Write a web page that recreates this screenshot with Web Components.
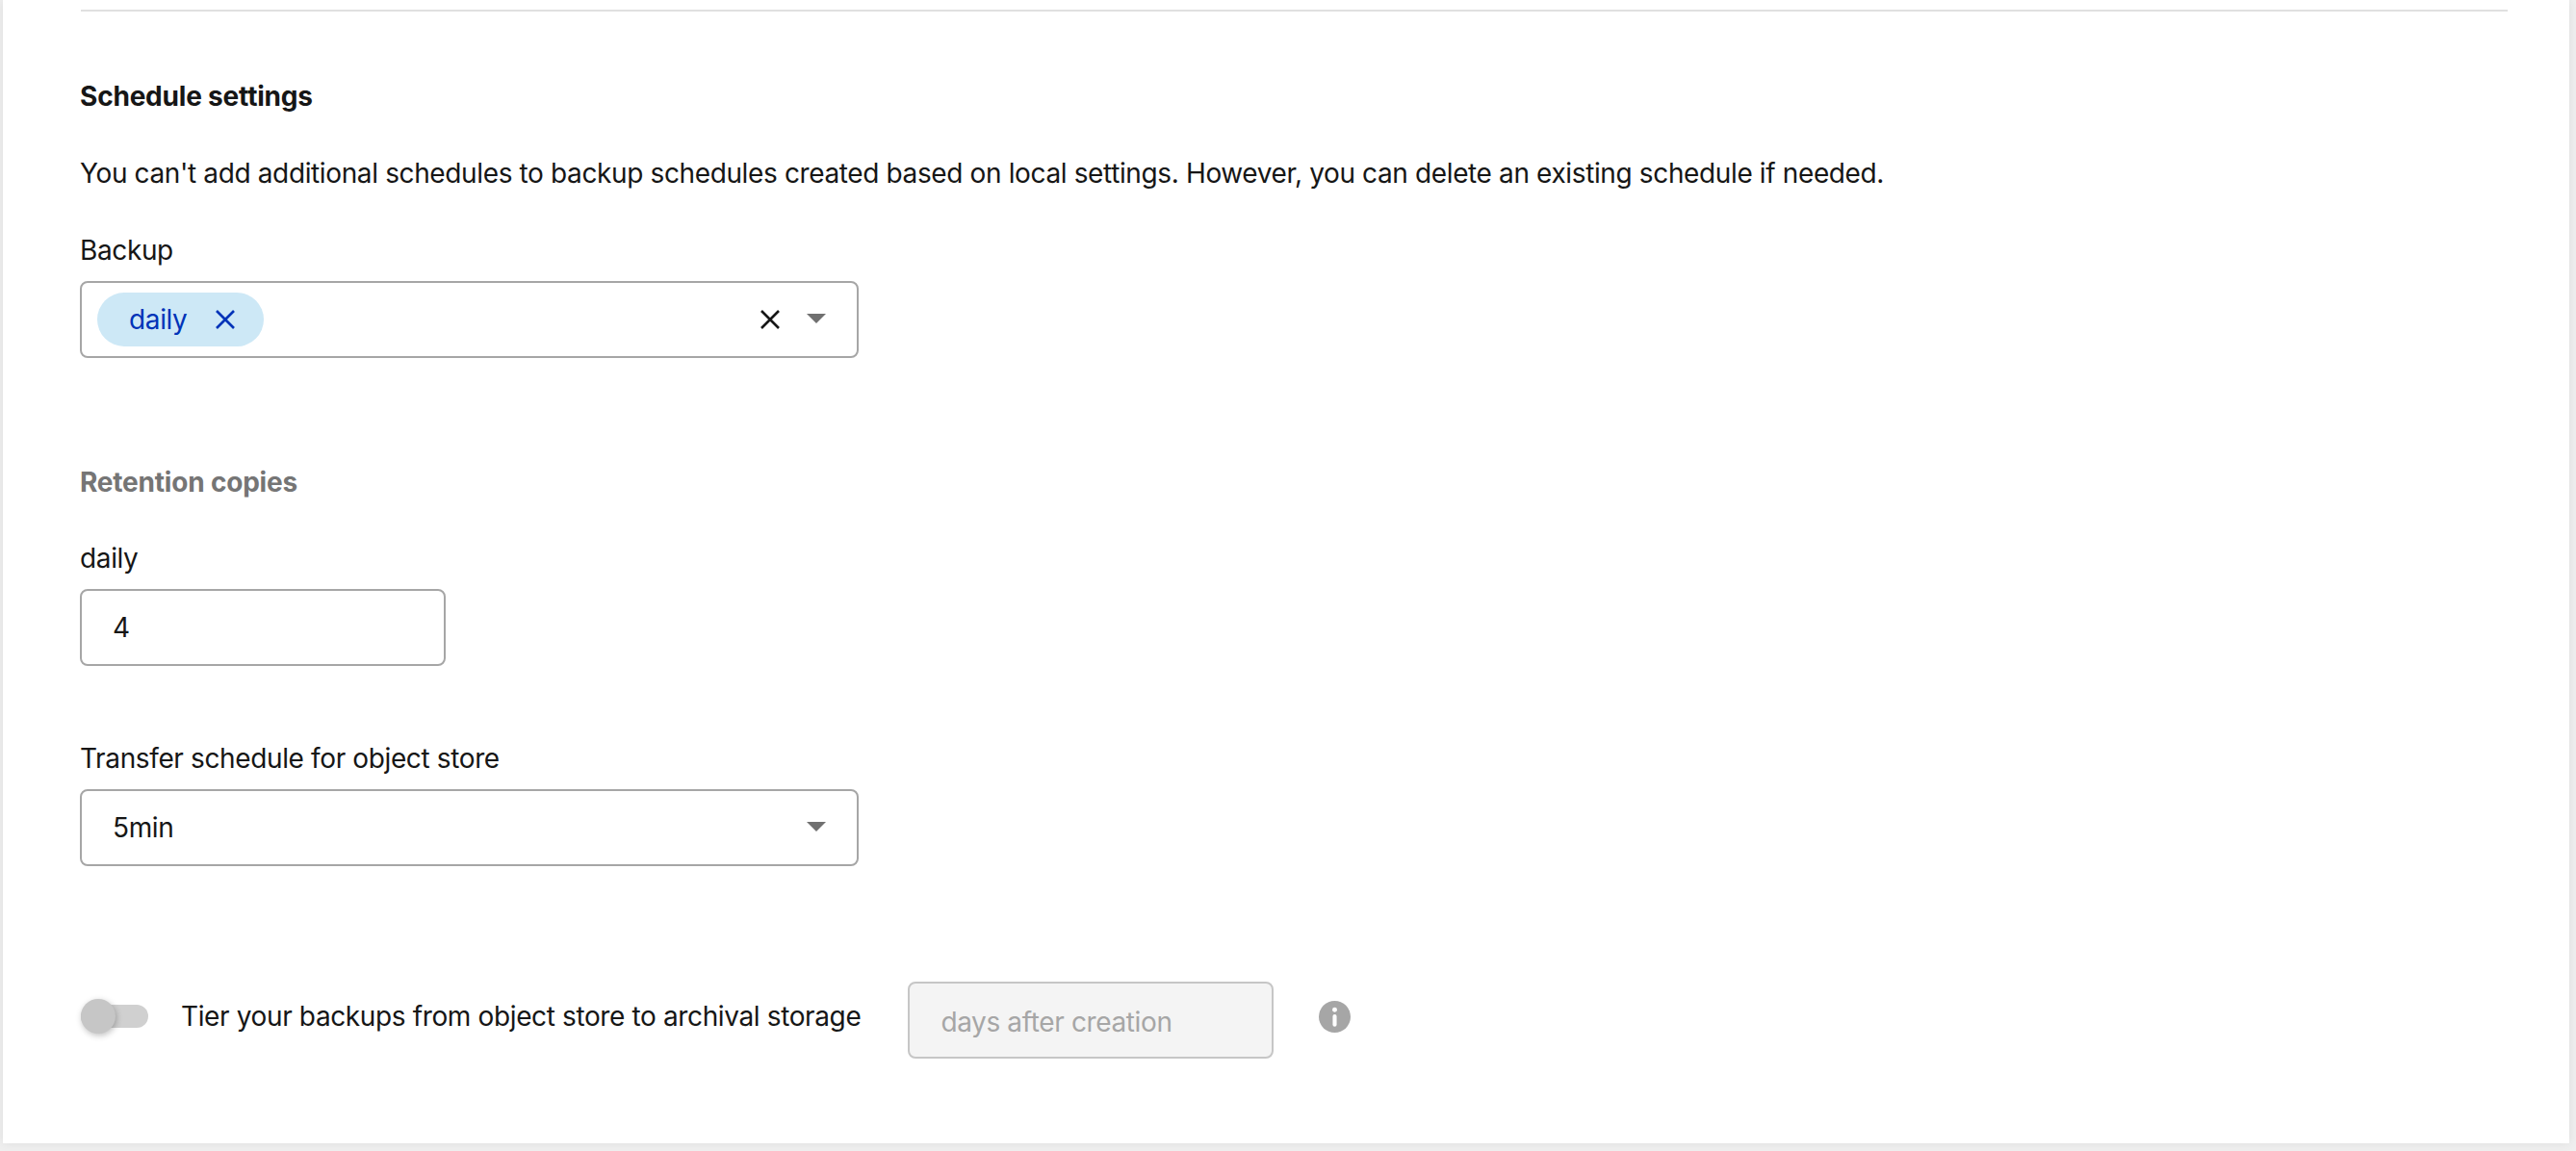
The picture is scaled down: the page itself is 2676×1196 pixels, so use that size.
<!DOCTYPE html>
<html>
<head>
<meta charset="utf-8">
<style>
  html, body { margin: 0; height: 100%; background: #efefef; }
  body { font-family: Inter, "Liberation Sans", sans-serif; font-size: 28px; letter-spacing: -0.37px; color: #161616; overflow: hidden; }
</style>
</head>
<body>
<settings-panel>
  <section-title>Schedule settings</section-title>
  <help-text>You can't add additional schedules to backup schedules created based on local settings. However, you can delete an existing schedule if needed.</help-text>
  <form-field label="Backup" style="margin-top:44px">
    <select-box wide clearable><tag-chip>daily</tag-chip></select-box>
  </form-field>
  <section-title muted style="margin-top:111px">Retention copies</section-title>
  <form-field label="daily" style="margin-top:43px">
    <text-box value="4"></text-box>
  </form-field>
  <form-field label="Transfer schedule for object store" style="margin-top:78px">
    <select-box wide value="5min"></select-box>
  </form-field>
  <tier-row style="margin-top:112px">Tier your backups from object store to archival storage</tier-row>
</settings-panel>

<script>
  class SettingsPanel extends HTMLElement {
    constructor() {
      super();
      this.attachShadow({ mode: 'open' });
      this.shadowRoot.innerHTML = `
        <style>
          :host { display: block; box-sizing: border-box; width: 2666px; height: 1188px; margin-left: 3px;
                  padding: 10px 64px 0 80px; background: #fff; box-shadow: 0 0 10px rgba(0,0,0,.08); }
          .rule { height: 2px; background: #e0e0e0; margin-left: 1px; }
          .body { margin-top: 70px; }
        </style>
        <div class="rule"></div>
        <div class="body"><slot></slot></div>
      `;
    }
  }

  class SectionTitle extends HTMLElement {
    constructor() {
      super();
      this.attachShadow({ mode: 'open' });
      this.shadowRoot.innerHTML = `
        <style>
          :host { display: block; font-size: 28px; font-weight: 700; line-height: 36px; letter-spacing: -0.2px; }
          :host([muted]) { color: #757575; }
        </style>
        <slot></slot>
      `;
    }
  }

  class HelpText extends HTMLElement {
    constructor() {
      super();
      this.attachShadow({ mode: 'open' });
      this.shadowRoot.innerHTML = `
        <style>:host { display: block; margin-top: 44px; line-height: 36px; white-space: nowrap; }</style>
        <slot></slot>
      `;
    }
  }

  class FormField extends HTMLElement {
    constructor() {
      super();
      this.attachShadow({ mode: 'open' });
      this.shadowRoot.innerHTML = `
        <style>
          :host { display: block; }
          label { display: block; line-height: 36px; margin-bottom: 14px; }
        </style>
        <label>${this.getAttribute('label')}</label>
        <slot></slot>
      `;
    }
  }

  const X_ICON = (color) => `<svg width="22" height="22" viewBox="0 0 22 22" fill="none" stroke="${color}" stroke-width="2.6"><path d="M2 2 L20 20 M20 2 L2 20"/></svg>`;

  class SelectBox extends HTMLElement {
    constructor() {
      super();
      this.attachShadow({ mode: 'open' });
      const value = this.getAttribute('value');
      this.shadowRoot.innerHTML = `
        <style>
          :host { display: flex; align-items: center; box-sizing: border-box; width: 809px; height: 80px;
                  border: 2px solid #a6a6a6; border-radius: 8px; background: #fff; padding: 0 32px 0 16px; }
          .val { padding-left: 16px; }
          .main { flex: 1; display: flex; align-items: center; }
          .clear { display: flex; margin-right: 27px; }
          .caret { width: 0; height: 0; border-left: 10px solid transparent; border-right: 10px solid transparent;
                   border-top: 10px solid #707070; margin-top: -2px; }
        </style>
        <div class="main"><slot></slot>${value ? `<span class="val">${value}</span>` : ''}</div>
        ${this.hasAttribute('clearable') ? `<span class="clear">${X_ICON('#161616')}</span>` : ''}
        <span class="caret"></span>
      `;
    }
  }

  class TagChip extends HTMLElement {
    constructor() {
      super();
      this.attachShadow({ mode: 'open' });
      this.shadowRoot.innerHTML = `
        <style>
          :host { display: inline-flex; align-items: center; height: 56px; box-sizing: border-box; padding: 0 29px 0 33px;
                  border-radius: 28px; background: #cde8f6; color: #0033b8; }
          svg { display: block; margin-left: 29px; }
        </style>
        <slot></slot>${X_ICON('#0033b8')}
      `;
    }
  }

  class TextBox extends HTMLElement {
    constructor() {
      super();
      this.attachShadow({ mode: 'open' });
      this.shadowRoot.innerHTML = `
        <style>
          :host { display: flex; align-items: center; box-sizing: border-box; width: 380px; height: 80px; padding-left: 32px;
                  border: 2px solid #a6a6a6; border-radius: 8px; background: #fff; }
          :host([disabled]) { border-color: #c6c6c6; background: #f4f4f4; color: #a6a6a6; padding-top: 3px; }
        </style>
        <span>${this.getAttribute('value')}</span>
      `;
    }
  }

  class ToggleSwitch extends HTMLElement {
    constructor() {
      super();
      this.attachShadow({ mode: 'open' });
      this.shadowRoot.innerHTML = `
        <style>
          :host { display: block; position: relative; width: 70px; height: 24px; border-radius: 12px; background: #d0d0d0; }
          .knob { position: absolute; left: 0; top: -6px; width: 36px; height: 36px; border-radius: 50%;
                  background: #c6c6c6; box-shadow: 1px 2px 6px rgba(0,0,0,.25); }
        </style>
        <div class="knob"></div>
      `;
    }
  }

  class InfoIcon extends HTMLElement {
    constructor() {
      super();
      this.attachShadow({ mode: 'open' });
      this.shadowRoot.innerHTML = `
        <style>:host { display: block; width: 33px; height: 33px; } svg { display: block; }</style>
        <svg width="33" height="33" viewBox="0 0 32 32">
          <circle cx="16" cy="16" r="16" fill="#a6a6a6"/>
          <circle cx="16" cy="9" r="2.4" fill="#fff"/>
          <rect x="14" y="13.5" width="4" height="12.5" rx="2" fill="#fff"/>
        </svg>
      `;
    }
  }

  class TierRow extends HTMLElement {
    constructor() {
      super();
      this.attachShadow({ mode: 'open' });
      this.shadowRoot.innerHTML = `
        <style>
          :host { display: flex; align-items: center; padding-left: 1px; }
          .text { margin-left: 34px; white-space: nowrap; }
          text-box { margin: 8px 0 0 49px; }
          info-icon { margin-left: 47px; }
        </style>
        <toggle-switch></toggle-switch>
        <span class="text"><slot></slot></span>
        <text-box disabled value="days after creation"></text-box>
        <info-icon></info-icon>
      `;
    }
  }

  customElements.define('settings-panel', SettingsPanel);
  customElements.define('section-title', SectionTitle);
  customElements.define('help-text', HelpText);
  customElements.define('form-field', FormField);
  customElements.define('select-box', SelectBox);
  customElements.define('tag-chip', TagChip);
  customElements.define('text-box', TextBox);
  customElements.define('toggle-switch', ToggleSwitch);
  customElements.define('info-icon', InfoIcon);
  customElements.define('tier-row', TierRow);
</script>
</body>
</html>
